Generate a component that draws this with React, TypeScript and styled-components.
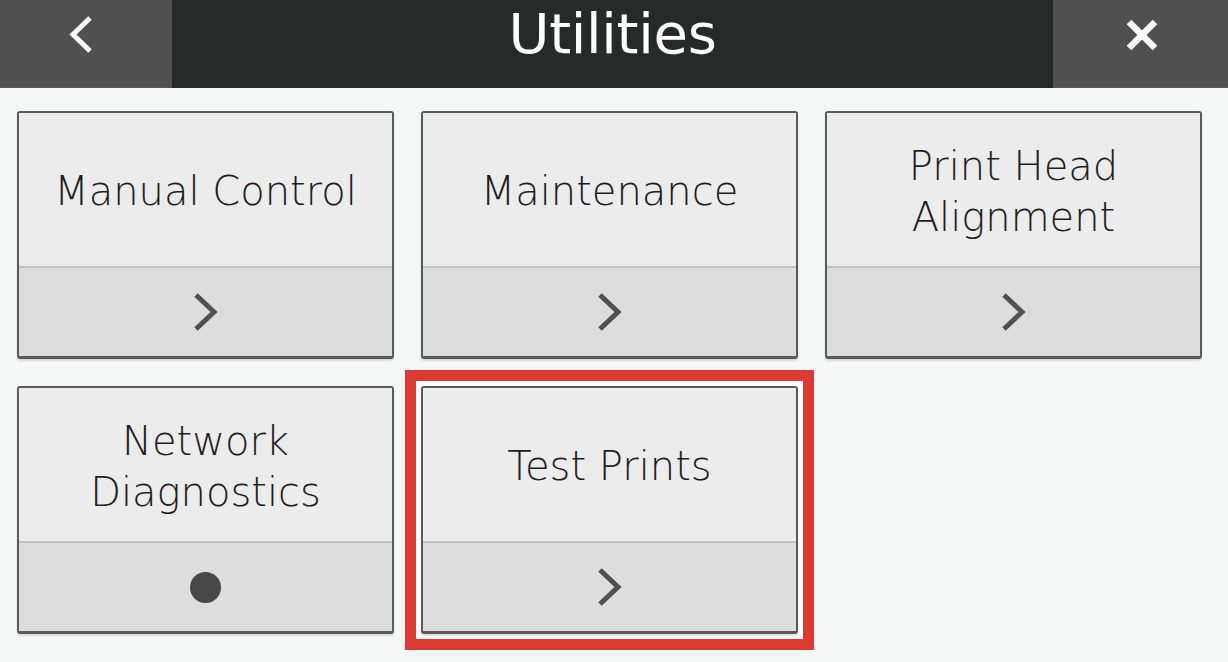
import React from "react";
import styled, { createGlobalStyle } from "styled-components";

const Global = createGlobalStyle`
  *, *::before, *::after { box-sizing: border-box; }
  html, body { margin: 0; padding: 0; background: #f5f7f6; }
  body { font-family: "DejaVu Sans", "Liberation Sans", sans-serif; }
`;

const Page = styled.div`
  width: 1228px;
  height: 662px;
  background: #f5f7f6;
  overflow: hidden;
`;

const Header = styled.header`
  display: grid;
  grid-template-columns: 172px 1fr 175px;
  height: 88px;
  background: #282a29;
`;

const HeaderButton = styled.button<{ $shift?: number }>`
  display: flex;
  align-items: center;
  justify-content: center;
  border: none;
  padding: 0 ${(p) => (p.$shift && p.$shift > 0 ? p.$shift * 2 : 0)}px 18px
    ${(p) => (p.$shift && p.$shift < 0 ? -p.$shift * 2 : 0)}px;
  margin: 0;
  background: #505050;
  box-shadow: inset 0 -12px 0 -11px #595959;
  cursor: pointer;
`;

const Title = styled.h1`
  margin: 0;
  display: flex;
  align-items: center;
  justify-content: center;
  padding-bottom: 22px;
  color: #ffffff;
  font-family: "DejaVu Sans", sans-serif;
  font-weight: 400;
  font-size: 56px;
  letter-spacing: -0.3px;
`;

const Grid = styled.div`
  display: grid;
  grid-template-columns: repeat(3, 377px);
  column-gap: 27px;
  row-gap: 27px;
  padding: 23px 0 0 17px;
`;

const Highlight = styled.div<{ $selected?: boolean }>`
  margin: ${(p) => (p.$selected ? "-16px" : "0")};
  border: ${(p) => (p.$selected ? "11px solid #dc3a32" : "none")};
  padding: ${(p) => (p.$selected ? "5px" : "0")};
  background: ${(p) => (p.$selected ? "#ffffff" : "transparent")};
`;

const Card = styled.div`
  display: flex;
  flex-direction: column;
  height: 248px;
  border: 2px solid #5a5a5a;
  border-bottom-width: 3px;
  border-radius: 3px;
  overflow: hidden;
  box-shadow: 0 2px 2px rgba(0, 0, 0, 0.12);
`;

const CardTop = styled.div`
  height: 155px;
  flex: none;
  display: flex;
  align-items: center;
  justify-content: center;
  text-align: center;
  background: #ececec;
  border-bottom: 2px solid #c2c2c2;
  color: #1e1e1e;
  font-family: "DejaVu Sans", sans-serif;
  font-weight: 200;
  font-size: 40px;
  line-height: 51px;
  padding: 4px 20px 0;
`;

const CardBottom = styled.div`
  flex: 1;
  display: flex;
  align-items: center;
  justify-content: center;
  background: #dcdddc;
`;

const Dot = styled.span`
  width: 31px;
  height: 31px;
  border-radius: 50%;
  background: #474747;
`;

const BackIcon = () => (
  <svg width="30" height="40" viewBox="0 0 30 40">
    <polyline points="24,3 7,19.5 24,36" fill="none" stroke="#ffffff" strokeWidth="5" />
  </svg>
);

const CloseIcon = () => (
  <svg width="34" height="32" viewBox="0 0 34 32">
    <g stroke="#ffffff" strokeWidth="6.5" strokeLinecap="butt">
      <line x1="4" y1="3" x2="30" y2="29" />
      <line x1="30" y1="3" x2="4" y2="29" />
    </g>
  </svg>
);

const Chevron = () => (
  <svg width="30" height="40" viewBox="0 0 30 40">
    <polyline points="5,3 23,20 5,37" fill="none" stroke="#505050" strokeWidth="5" />
  </svg>
);

type Item = { label: React.ReactNode; kind: "chevron" | "dot"; selected?: boolean };

const items: Item[] = [
  { label: "Manual Control", kind: "chevron" },
  { label: "Maintenance", kind: "chevron" },
  { label: <>Print Head<br />Alignment</>, kind: "chevron" },
  { label: <>Network<br />Diagnostics</>, kind: "dot" },
  { label: "Test Prints", kind: "chevron", selected: true },
];

export default function App() {
  return (
    <Page>
      <Global />
      <Header>
        <HeaderButton aria-label="Back" $shift={5}>
          <BackIcon />
        </HeaderButton>
        <Title>Utilities</Title>
        <HeaderButton aria-label="Close" $shift={-1}>
          <CloseIcon />
        </HeaderButton>
      </Header>
      <Grid>
        {items.map((it, i) => (
          <Highlight key={i} $selected={it.selected}>
            <Card>
              <CardTop>{it.label}</CardTop>
              <CardBottom>{it.kind === "dot" ? <Dot /> : <Chevron />}</CardBottom>
            </Card>
          </Highlight>
        ))}
      </Grid>
    </Page>
  );
}
